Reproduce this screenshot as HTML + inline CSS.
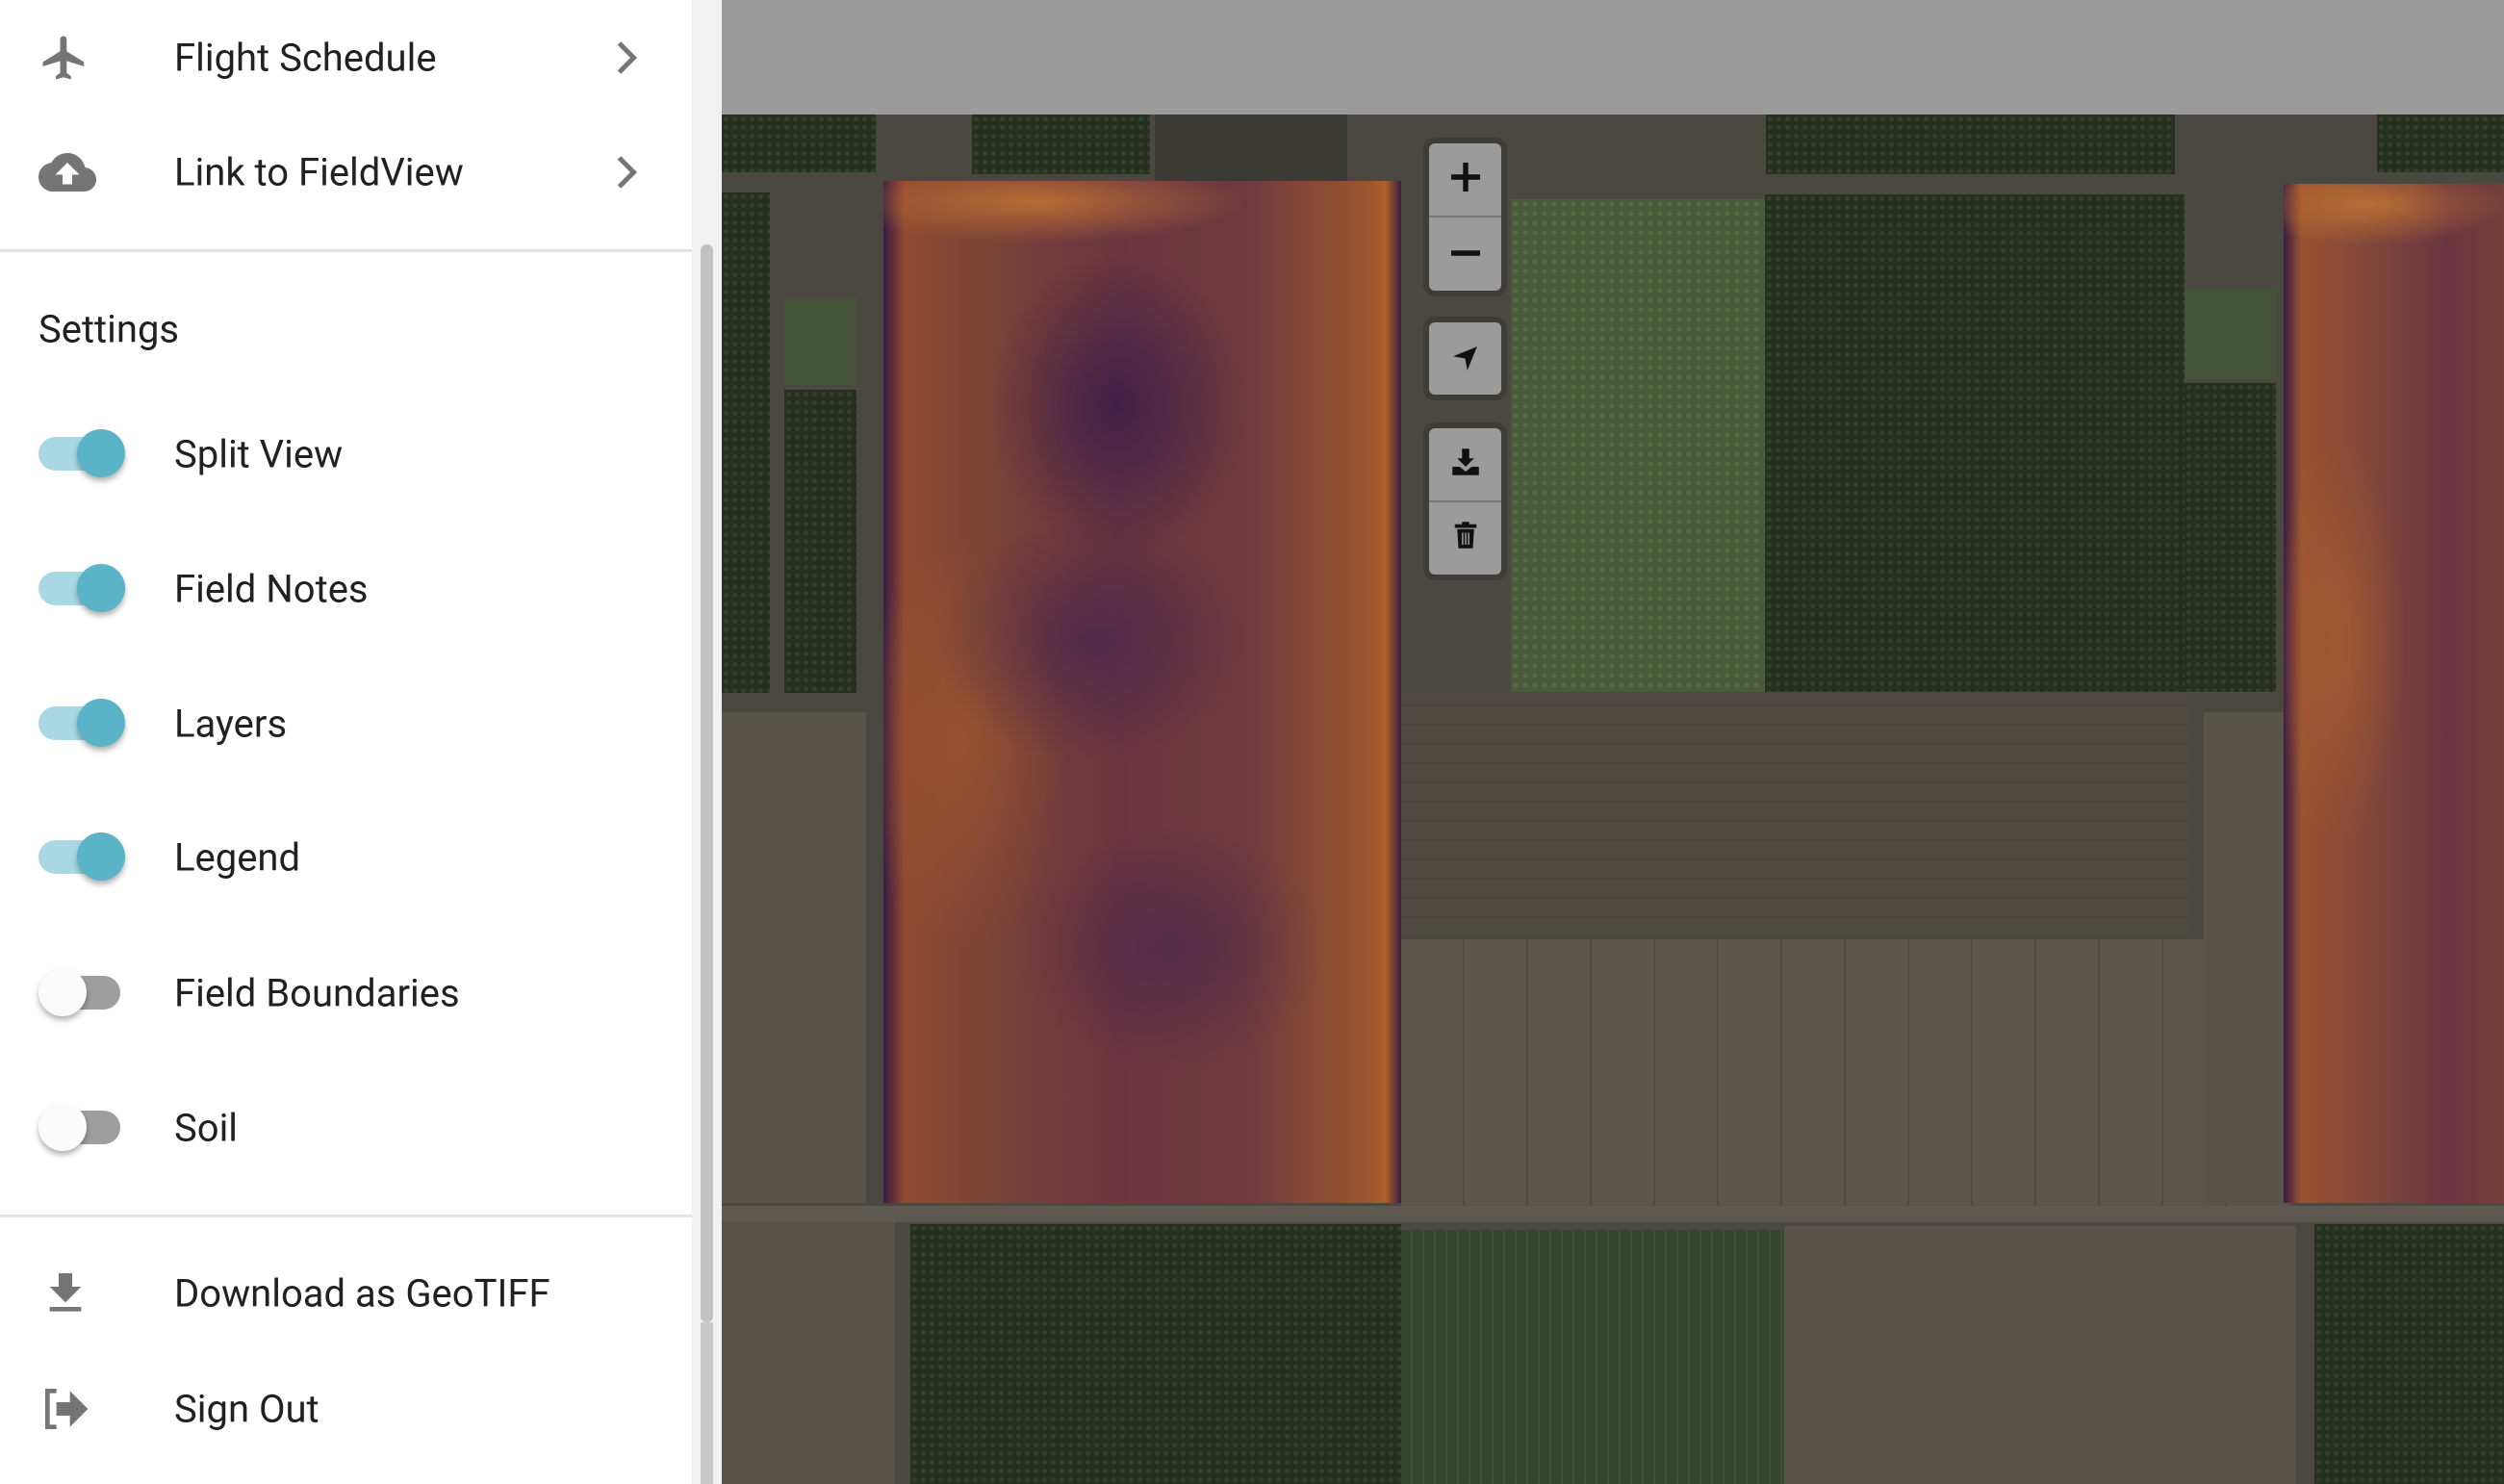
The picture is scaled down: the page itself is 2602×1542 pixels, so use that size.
<!DOCTYPE html>
<html><head><meta charset="utf-8"><style>
*{margin:0;padding:0;box-sizing:border-box}
body{width:2602px;height:1542px;overflow:hidden;position:relative;background:#fff;font-family:"Roboto","Liberation Sans",sans-serif;color:#212121}
.sb{position:absolute;left:0;top:0;width:719px;height:1542px;background:#fff}
.row{position:absolute;left:0;width:719px;font-size:40px;letter-spacing:0}
.row span{position:absolute;left:181px;transform:translateY(-50%)}
.ico{position:absolute;left:40px;transform:translateY(-50%)}
.chev{position:absolute;left:636px;transform:translateY(-50%)}
.div{position:absolute;left:0;width:719px;height:3px;background:#e2e2e2}
.tg{position:absolute;left:40px;width:92px;height:52px;transform:translateY(-50%)}
.tg .tr{position:absolute;left:0;top:8px;width:75px;height:35px;border-radius:18px}
.tg .kn{position:absolute;top:0;width:50px;height:50px;border-radius:50%;box-shadow:0 4px 6px rgba(0,0,0,.3)}
.on .tr{background:#a9d8e2}.on .kn{left:40px;background:#5bb3c8}
.off .tr{background:#9e9e9e;left:10px;width:75px}.off .kn{left:0;background:#fafafa}
.map{position:absolute;left:750px;top:0;width:1852px;height:1542px;background:#4b4841;overflow:hidden}
.b{position:absolute}
.orch{background:#26301f;background-image:radial-gradient(circle,#33402b 2px,transparent 3px);background-size:9px 9px}
.btn{position:absolute;left:1485px;width:75px;background:#9b9b9b;border-radius:6px;box-shadow:0 0 0 6px rgba(60,55,50,.7)}
.heat{background:
radial-gradient(ellipse 40% 4% at 30% 2%,rgba(200,120,50,.8) 0%,transparent 100%),
radial-gradient(ellipse 25% 15% at 45% 22%,rgba(60,30,72,.9) 0%,transparent 100%),
radial-gradient(ellipse 30% 12% at 40% 45%,rgba(70,36,76,.7) 0%,transparent 100%),
radial-gradient(ellipse 30% 12% at 55% 75%,rgba(70,36,76,.6) 0%,transparent 100%),
radial-gradient(ellipse 20% 20% at 15% 55%,rgba(160,88,46,.7) 0%,transparent 100%),
linear-gradient(90deg,#3a1c44 0%,#8e4a30 4%,#7e4436 18%,#6a3540 45%,#6e3a3e 70%,#9c562e 94%,#b0602a 97%,#3a1c44 100%)}
</style></head><body>
<div class="sb">
 <div class="row" style="top:60px">
  <svg class="ico" width="54" height="54" viewBox="0 0 24 24"><path fill="#757575" d="M21 16v-2l-8-5V3.5c0-.83-.67-1.5-1.5-1.5S10 2.670 10 3.5V9l-8 5v2l8-2.5V19l-2 1.5V22l3.5-1 3.5 1v-1.5L13 19v-5.5l8 2.5z"/></svg>
  <span>Flight Schedule</span>
  <svg class="chev" width="30" height="40" viewBox="0 0 12 16"><path d="M3 2l6 6-6 6" fill="none" stroke="#757575" stroke-width="2"/></svg>
 </div>
 <div class="row" style="top:179px">
  <svg class="ico" width="60" height="60" viewBox="0 0 24 24"><path fill="#757575" d="M19.35 10.04C18.67 6.59 15.64 4 12 4 9.11 4 6.6 5.64 5.35 8.04 2.34 8.36 0 10.91 0 14c0 3.310 2.69 6 6 6h13c2.76 0 5-2.24 5-5 0-2.64-2.05-4.78-4.65-4.960zM14 13v4h-4v-4H7l5-5 5 5h-3z"/></svg>
  <span>Link to FieldView</span>
  <svg class="chev" width="30" height="40" viewBox="0 0 12 16"><path d="M3 2l6 6-6 6" fill="none" stroke="#757575" stroke-width="2"/></svg>
 </div>
 <div class="div" style="top:259px"></div>
 <div class="row" style="top:342px"><span style="left:40px">Settings</span></div>
 <div class="row" style="top:472px"><div class="tg on"><div class="tr"></div><div class="kn"></div></div><span>Split View</span></div>
 <div class="row" style="top:612px"><div class="tg on"><div class="tr"></div><div class="kn"></div></div><span>Field Notes</span></div>
 <div class="row" style="top:752px"><div class="tg on"><div class="tr"></div><div class="kn"></div></div><span>Layers</span></div>
 <div class="row" style="top:891px"><div class="tg on"><div class="tr"></div><div class="kn"></div></div><span>Legend</span></div>
 <div class="row" style="top:1032px"><div class="tg off"><div class="tr"></div><div class="kn"></div></div><span>Field Boundaries</span></div>
 <div class="row" style="top:1172px"><div class="tg off"><div class="tr"></div><div class="kn"></div></div><span>Soil</span></div>
 <div class="div" style="top:1262px"></div>
 <div class="row" style="top:1344px">
  <svg class="ico" width="56" height="56" viewBox="0 0 24 24"><path fill="#757575" d="M19 9h-4V3H9v6H5l7 7 7-7zM5 18v2h14v-2H5z"/></svg>
  <span>Download as GeoTIFF</span></div>
 <div class="row" style="top:1464px">
  <svg class="ico" width="56" height="56" viewBox="0 0 24 24"><path fill="none" stroke="#757575" stroke-width="2" d="M8 4H4v16h4"/><path fill="#757575" d="M8 9h6V4l8 8-8 8v-5H8z"/></svg>
  <span>Sign Out</span></div>
</div>
<div style="position:absolute;left:719px;top:0;width:31px;height:1542px;background:#f1f1f1"></div>
<div style="position:absolute;left:728px;top:254px;width:13px;height:1120px;background:#c1c1c1;border-radius:6px"></div>
<div style="position:absolute;left:728px;top:1374px;width:13px;height:168px;background:#c8c8c8"></div>
<div class="map">
 <div class="b" style="left:0;top:0;width:1852px;height:119px;background:#9b9b9b"></div>
 <div class="b orch" style="left:0;top:119px;width:160px;height:60px"></div>
 <div class="b orch" style="left:260px;top:119px;width:185px;height:62px"></div>
 <div class="b" style="left:450px;top:119px;width:200px;height:70px;background:#3c3a35"></div>
 <div class="b orch" style="left:1085px;top:119px;width:425px;height:62px"></div>
 <div class="b orch" style="left:1720px;top:119px;width:132px;height:60px"></div>
 <div class="b orch" style="left:0;top:200px;width:50px;height:520px"></div>
 <div class="b" style="left:65px;top:310px;width:75px;height:90px;background:#445238"></div>
 <div class="b orch" style="left:65px;top:405px;width:75px;height:315px"></div>
 <div class="b" style="left:0;top:740px;width:150px;height:510px;background:#59544a"></div>
 <div class="b heat" style="left:168px;top:188px;width:538px;height:1062px"></div>
 <div class="b" style="left:820px;top:207px;width:271px;height:512px;background:#4a5a3a;background-image:radial-gradient(circle,#566a44 2px,transparent 3px);background-size:10px 10px"></div>
 <div class="b orch" style="left:1084px;top:202px;width:436px;height:517px"></div>
 <div class="b orch" style="left:1520px;top:398px;width:95px;height:321px"></div>
 <div class="b" style="left:1520px;top:300px;width:95px;height:95px;background:#445238"></div>
 <div class="b" style="left:706px;top:722px;width:817px;height:250px;background:#4f4a41;background-image:repeating-linear-gradient(0deg,transparent 0 18px,rgba(0,0,0,.08) 18px 20px)"></div>
 <div class="b" style="left:706px;top:976px;width:925px;height:277px;background:#5b564c;background-image:repeating-linear-gradient(90deg,transparent 0 64px,rgba(0,0,0,.12) 64px 66px)"></div>
 <div class="b" style="left:1540px;top:740px;width:90px;height:510px;background:#59544a"></div>
 <div class="b" style="left:1623px;top:191px;width:229px;height:1059px;background:radial-gradient(ellipse 60% 4% at 40% 2%,rgba(200,120,50,.8),transparent),radial-gradient(ellipse 30% 20% at 25% 45%,rgba(170,94,46,.7),transparent),linear-gradient(90deg,#3a1c44 0%,#9a5230 8%,#84483a 35%,#6a3540 75%,#74403a 100%)"></div>
 <div class="b" style="left:0;top:1253px;width:1852px;height:17px;background:#5e5a52"></div>
 <div class="b" style="left:0;top:1270px;width:180px;height:272px;background:#57534a"></div>
 <div class="b orch" style="left:196px;top:1272px;width:510px;height:270px"></div>
 <div class="b" style="left:706px;top:1278px;width:398px;height:264px;background:#34452d;background-image:repeating-linear-gradient(90deg,transparent 0 10px,rgba(80,100,60,.4) 10px 12px)"></div>
 <div class="b" style="left:1104px;top:1274px;width:532px;height:268px;background:#57534a"></div>
 <div class="b orch" style="left:1655px;top:1272px;width:197px;height:270px"></div>
</div>
<div class="btn" style="top:149px;height:153px">
 <svg style="position:absolute;left:20px;top:17px" width="36" height="36" viewBox="0 0 12 12"><path d="M6 1v10M1 6h10" stroke="#111" stroke-width="1.8"/></svg>
 <div style="position:absolute;left:0;top:75px;width:75px;height:2px;background:#777"></div>
 <svg style="position:absolute;left:20px;top:96px" width="36" height="36" viewBox="0 0 12 12"><path d="M1 6h10" stroke="#111" stroke-width="1.8"/></svg>
</div>
<div class="btn" style="top:335px;height:75px">
 <svg style="position:absolute;left:24px;top:24px" width="27" height="27" viewBox="0 0 24 24"><path d="M1 10L23 1 14 23 12 12z" fill="#111"/></svg>
</div>
<div class="btn" style="top:445px;height:152px">
 <svg style="position:absolute;left:23px;top:20px" width="30" height="30" viewBox="0 0 24 24"><path fill="#111" d="M9 1h6v8h4l-7 7-7-7h4zM1 16h6l5 4 5-4h6v7H1z"/></svg>
 <div style="position:absolute;left:0;top:75px;width:75px;height:2px;background:#777"></div>
 <svg style="position:absolute;left:25px;top:96px" width="26" height="30" viewBox="0 0 20 24"><path fill="#111" d="M7 1h6v2h6v3H1V3h6zM3 7h14l-1 16H4z"/><path d="M7.5 10v10M10 10v10M12.5 10v10" stroke="#9b9b9b" stroke-width="1.2"/></svg>
</div>
</body></html>
